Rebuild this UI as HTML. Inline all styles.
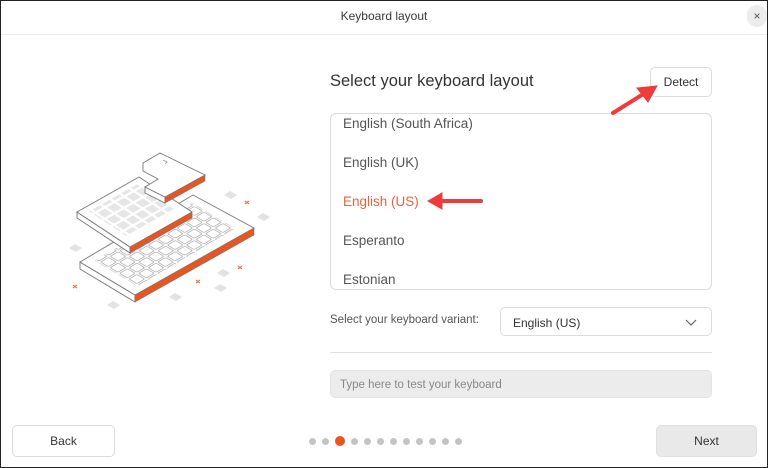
<!DOCTYPE html>
<html><head><meta charset="utf-8"><style>
*{box-sizing:border-box;margin:0;padding:0}
body{width:768px;height:468px;overflow:hidden;background:#fff;font-family:"Liberation Sans","DejaVu Sans",sans-serif;color:#3d3d3d;position:relative}
.frame{position:absolute;inset:0;border:1px solid #222}
.abs{position:absolute}
.title{left:0;width:768px;top:9px;text-align:center;font-size:12px;color:#3a3a3a}
.close{left:747px;top:5px;width:20px;height:22px;border-radius:10px;background:#ececec;font-size:12px;text-align:center;line-height:22px;color:#555}
.sep{left:1px;width:766px;top:34px;height:1px;background:#ededed}
h1{position:absolute;left:330px;top:72px;font-size:16.5px;font-weight:normal;color:#333}
.btn{position:absolute;border:1px solid #dcdcdc;border-radius:5px;background:#fff;font-size:12px;text-align:center;color:#333}
.list{left:330px;top:113px;width:382px;height:177px;border:1px solid #dcdcdc;border-radius:6px;overflow:hidden}
.it{position:absolute;left:12px;font-size:13.5px;color:#555}
.var{left:330px;top:314px;font-size:11.5px;color:#555}
.dd{left:500px;top:307px;width:212px;height:29px;border:1px solid #dcdcdc;border-radius:5px;font-size:12px;color:#333;padding:8px 0 0 12px}
.line{left:330px;top:352px;width:382px;height:1px;background:#e0e0e0}
.inp{left:330px;top:370px;width:382px;height:28px;border-radius:5px;background:#ececec;border:1px solid #e2e2e2;font-size:11.5px;color:#888;padding:8px 0 0 9px}
.dot{position:absolute;top:438px;width:7px;height:7px;border-radius:50%;background:#c4c4c4}
</style></head><body>
<div class="frame"></div>
<div class="abs title">Keyboard layout</div>
<div class="abs close">×</div>
<div class="abs sep"></div>

<svg class="abs" style="left:0;top:0" width="300" height="330">
<defs>
<pattern id="k" patternUnits="userSpaceOnUse" width="11" height="11">
<rect x="1" y="1" width="9" height="9" rx="1.5" fill="#fff" stroke="#aaa" stroke-width=".8"/>
</pattern>
<pattern id="g" patternUnits="userSpaceOnUse" width="11" height="11">
<rect x="1" y="1" width="8.5" height="8.5" fill="#e6e6e6"/>
</pattern>
</defs>
<g fill="#e3e3e3">
<path d="M69 248l6-4 7 4-6 4z"/><path d="M224 195l6-4 7 4-6 4z"/><path d="M257 217l6-4 7 4-6 4z"/>
<path d="M217 273l6-4 7 4-6 4z"/><path d="M214 288l6-4 7 4-6 4z"/><path d="M169 297l6-4 7 4-6 4z"/>
<path d="M107 305l6-4 7 4-6 4z"/>
<path d="M95 270 L200 210 L215 218 L110 278Z" fill="#ececec"/>
</g>
<g stroke="#f07050" stroke-width="1.1"><path d="M73 285l4 3M77 285l-4 3M196 280l4 3M200 280l-4 3M238 266l4 3M242 266l-4 3M245 201l4 3M249 201l-4 3"/></g>
<!-- bottom keyboard -->
<path d="M80 262 L135 295 L135 302 L80 269Z" fill="#fff" stroke="#777" stroke-width=".9"/>
<path d="M135 295 L254 228 L254 235 L135 302Z" fill="#e95420" stroke="#777" stroke-width=".6"/>
<path d="M80 262 L193 195 L254 228 L135 295Z" fill="#fff" stroke="#777" stroke-width=".9"/>
<g transform="matrix(0.869,-0.515,0.859,0.516,80,262)">
<rect x="10" y="7" width="112" height="50" fill="url(#k)"/>
</g>
<!-- middle slab -->
<path d="M77 212 L130 247 L130 253 L77 218Z" fill="#fff" stroke="#777" stroke-width=".9"/>
<path d="M130 247 L192 212 L192 218 L130 253Z" fill="#e95420" stroke="#777" stroke-width=".6"/>
<path d="M77 212 L139 177 L192 212 L130 247Z" fill="#fff" stroke="#777" stroke-width=".9"/>
<g transform="matrix(0.873,-0.493,0.841,0.556,77,212)">
<rect x="8" y="6" width="55" height="44" fill="url(#g)"/>
</g>
<!-- top piece -->
<path d="M165 197 L205 175 L205 181 L165 203Z" fill="#e95420" stroke="#777" stroke-width=".6"/>
<path d="M145 187 L165 197 L165 203 L145 193Z" fill="#fff" stroke="#777" stroke-width=".9"/>
<path d="M143 163 L160 153 L205 175 L165 197 L145 187 L158 179 L143 171Z" fill="#fff" stroke="#777" stroke-width=".9"/>
<path d="M163 160l4 2-2 2" stroke="#999" fill="none" stroke-width=".8"/>
</svg>

<h1>Select your keyboard layout</h1>
<div class="btn" style="left:650px;top:67px;width:62px;height:30px;line-height:28px">Detect</div>

<div class="abs list">
<div class="it" style="top:2px">English (South Africa)</div>
<div class="it" style="top:41px">English (UK)</div>
<div class="it" style="top:80px;color:#e9633c">English (US)</div>
<div class="it" style="top:119px">Esperanto</div>
<div class="it" style="top:158px">Estonian</div>
</div>

<svg class="abs" style="left:0;top:0" width="768" height="468">
<g stroke="#ee3b3b" stroke-width="4" stroke-linecap="round" fill="#ee3b3b">
<line x1="613" y1="113" x2="645" y2="93"/>
<path d="M657 86 L637 88 L648 102 Z" stroke-width="1"/>
<line x1="481" y1="201" x2="440" y2="201"/>
<path d="M428 201 L442 193 L442 209 Z" stroke-width="1"/>
</g>
</svg>

<div class="abs var">Select your keyboard variant:</div>
<div class="abs dd">English (US)<svg style="position:absolute;right:14px;top:11px" width="12" height="8"><path d="M1 1l5 5 5-5" stroke="#666" fill="none" stroke-width="1.2"/></svg></div>
<div class="abs line"></div>
<div class="abs inp">Type here to test your keyboard</div>

<div class="btn" style="left:12px;top:425px;width:103px;height:32px;line-height:30px">Back</div>
<div class="btn" style="left:656px;top:425px;width:101px;height:32px;line-height:30px;background:#e9e9e9;border-color:#e0e0e0">Next</div>

<div class="dot" style="left:309px"></div>
<div class="dot" style="left:322px"></div>
<div class="dot" style="left:335px;top:436px;width:10px;height:10px;background:#e95420"></div>
<div class="dot" style="left:351px"></div>
<div class="dot" style="left:364px"></div>
<div class="dot" style="left:377px"></div>
<div class="dot" style="left:390px"></div>
<div class="dot" style="left:403px"></div>
<div class="dot" style="left:416px"></div>
<div class="dot" style="left:429px"></div>
<div class="dot" style="left:442px"></div>
<div class="dot" style="left:455px"></div>
</body></html>
